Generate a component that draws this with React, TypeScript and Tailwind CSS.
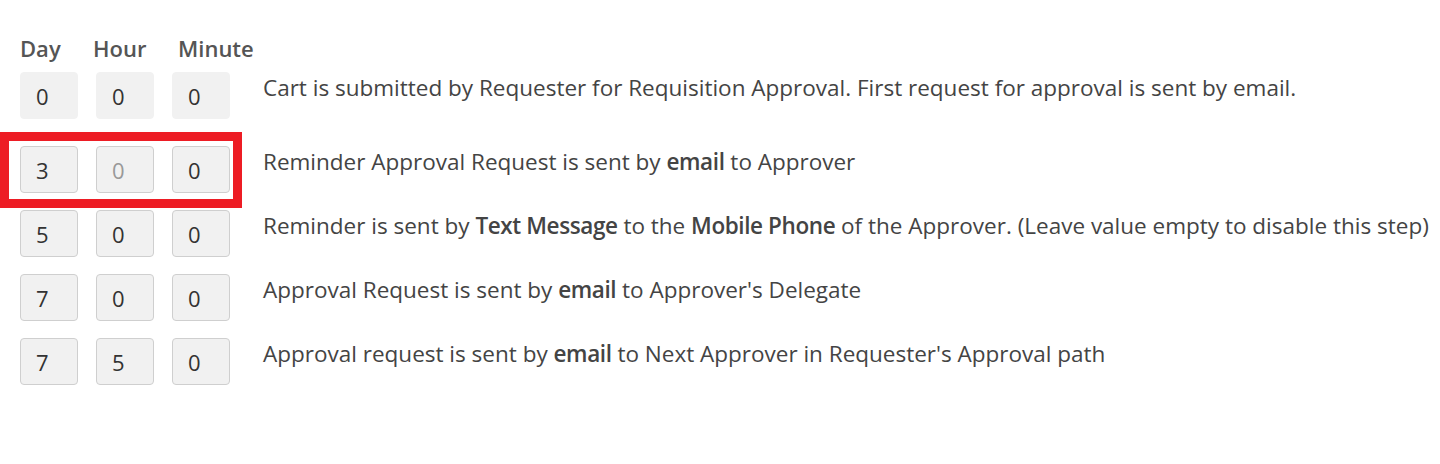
import { useState } from "react";

type Step = {
  day: string;
  hour: string;
  minute: string;
  text: React.ReactNode;
};

const Em = ({ children }: { children: React.ReactNode }) => (
  <b className="font-semibold tracking-[-0.4px]">{children}</b>
);

const steps: Step[] = [
  {
    day: "0",
    hour: "0",
    minute: "0",
    text: "Cart is submitted by Requester for Requisition Approval. First request for approval is sent by email.",
  },
  {
    day: "3",
    hour: "",
    minute: "0",
    text: (
      <>
        Reminder Approval Request is sent by <Em>email</Em> to Approver
      </>
    ),
  },
  {
    day: "5",
    hour: "0",
    minute: "0",
    text: (
      <>
        Reminder is sent by <Em>Text Message</Em> to the <Em>Mobile Phone</Em> of the Approver. (Leave value empty to
        disable this step)
      </>
    ),
  },
  {
    day: "7",
    hour: "0",
    minute: "0",
    text: (
      <>
        Approval Request is sent by <Em>email</Em> to Approver's Delegate
      </>
    ),
  },
  {
    day: "7",
    hour: "5",
    minute: "0",
    text: (
      <>
        Approval request is sent by <Em>email</Em> to Next Approver in Requester's Approval path
      </>
    ),
  },
];

const TimeBox = ({
  value,
  placeholder,
  locked,
}: {
  value: string;
  placeholder?: string;
  locked?: boolean;
}) => {
  const [val, setVal] = useState(value);
  return (
    <input
      value={val}
      placeholder={placeholder}
      readOnly={locked}
      onChange={(e) => setVal(e.target.value)}
      className={`h-[47px] w-[58px] rounded-[4px] border bg-[#f1f1f1] px-[15px] text-[22px] text-[#333] outline-none placeholder:text-[#999] ${
        locked ? "border-[#f1f1f1]" : "border-[#cfcfcf]"
      }`}
    />
  );
};

export default function App() {
  return (
    <div
      className="relative min-h-[464px] bg-white pl-[20px] pt-[34px] text-[#444]"
      style={{ fontFamily: '"Open Sans", "Noto Sans", sans-serif' }}
    >
      <div className="flex text-[22px] font-semibold leading-[28px] text-[#555]">
        <div className="w-[73px]">Day</div>
        <div className="w-[85px]">Hour</div>
        <div>Minute</div>
      </div>

      <div className="mt-[10px] flex flex-col">
        {steps.map((step, i) => (
          <div
            key={i}
            className={`flex items-start ${i === 0 ? "" : i === 1 ? "mt-[27px]" : "mt-[17px]"}`}
          >
            <div className="flex gap-[18px]">
              <TimeBox value={step.day} locked={i === 0} />
              <TimeBox value={step.hour} placeholder="0" locked={i === 0} />
              <TimeBox value={step.minute} locked={i === 0} />
            </div>
            <div className="ml-[33px] mt-[1px] whitespace-nowrap text-[22.5px] leading-[30px]">{step.text}</div>
          </div>
        ))}
      </div>

      {/* highlight around the reminder row */}
      <div className="pointer-events-none absolute left-0 top-[132px] h-[76px] w-[242px] border-[9px] border-[#ed1c24]" />
    </div>
  );
}
